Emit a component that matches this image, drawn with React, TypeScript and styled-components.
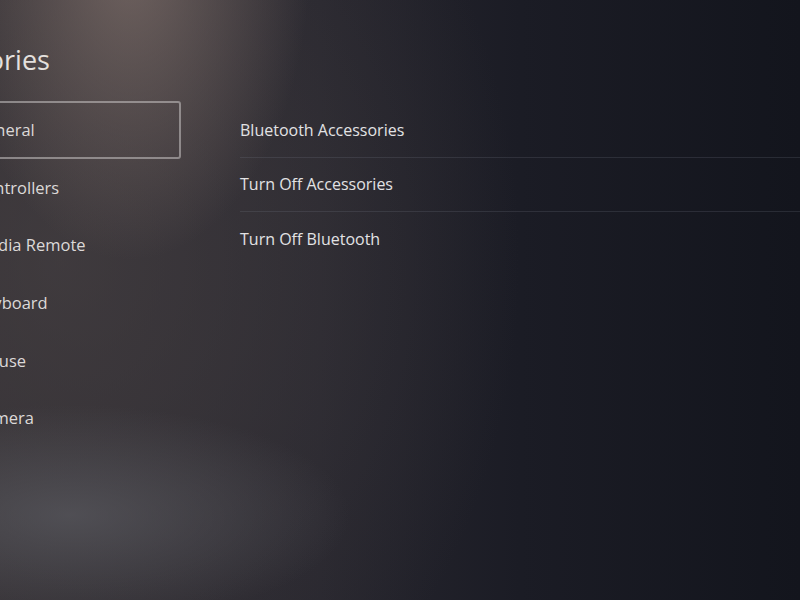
import React from "react";
import styled, { createGlobalStyle } from "styled-components";

const Global = createGlobalStyle`
  html, body { margin: 0; padding: 0; background: #15161e; }
  body { font-family: "Open Sans", "Noto Sans", sans-serif; }
`;

const Screen = styled.div`
  width: 800px;
  height: 600px;
  overflow: hidden;
  display: flex;
  background:
    radial-gradient(ellipse 180px 300px at 130px -40px, rgba(135, 118, 112, 0.7), rgba(135, 118, 112, 0) 100%),
    radial-gradient(ellipse 280px 110px at 70px 515px, rgba(90, 90, 96, 0.7), rgba(90, 90, 96, 0) 100%),
    radial-gradient(ellipse 460px 580px at 60px 260px, rgba(72, 66, 68, 0.65), rgba(72, 66, 68, 0) 100%),
    linear-gradient(90deg, #302d32 0%, #27262e 40%, #1b1c25 65%, #13151d 100%);
`;

const LeftPanel = styled.div`
  margin-left: -100px;
  width: 281px;
  flex: none;
  display: flex;
  flex-direction: column;
`;

const Title = styled.h1`
  margin: 0;
  padding: 43px 0 0 4px;
  height: 101px;
  box-sizing: border-box;
  font-weight: 400;
  font-size: 27px;
  line-height: 34px;
  color: #e4e0de;
  white-space: nowrap;
`;

const Menu = styled.div`
  display: flex;
  flex-direction: column;
`;

const MenuItem = styled.div<{ $selected?: boolean }>`
  height: 57.6px;
  box-sizing: border-box;
  display: flex;
  align-items: center;
  padding-left: 72px;
  font-size: 16.5px;
  color: #dcd9d8;
  white-space: nowrap;
  border: 2px solid ${(p) => (p.$selected ? "rgba(200, 196, 196, 0.55)" : "transparent")};
  border-radius: 3px;
`;

const RightPanel = styled.div`
  flex: 1;
  margin-left: 59px;
  margin-right: -40px;
  padding-top: 103px;
  display: flex;
  flex-direction: column;
`;

const Row = styled.div`
  height: 54.5px;
  box-sizing: border-box;
  display: flex;
  align-items: center;
  font-size: 16px;
  color: #e2e2e4;
  border-bottom: 1px solid rgba(120, 122, 135, 0.22);
  &:last-child { border-bottom: none; }
`;

const menu = ["General", "Controllers", "Media Remote", "Keyboard", "Mouse", "Camera"];
const rows = ["Bluetooth Accessories", "Turn Off Accessories", "Turn Off Bluetooth"];

export default function App() {
  return (
    <>
      <Global />
      <Screen>
        <LeftPanel>
          <Title>Accessories</Title>
          <Menu>
            {menu.map((m, i) => (
              <MenuItem key={m} $selected={i === 0}>{m}</MenuItem>
            ))}
          </Menu>
        </LeftPanel>
        <RightPanel>
          {rows.map((r) => (
            <Row key={r}>{r}</Row>
          ))}
        </RightPanel>
      </Screen>
    </>
  );
}
